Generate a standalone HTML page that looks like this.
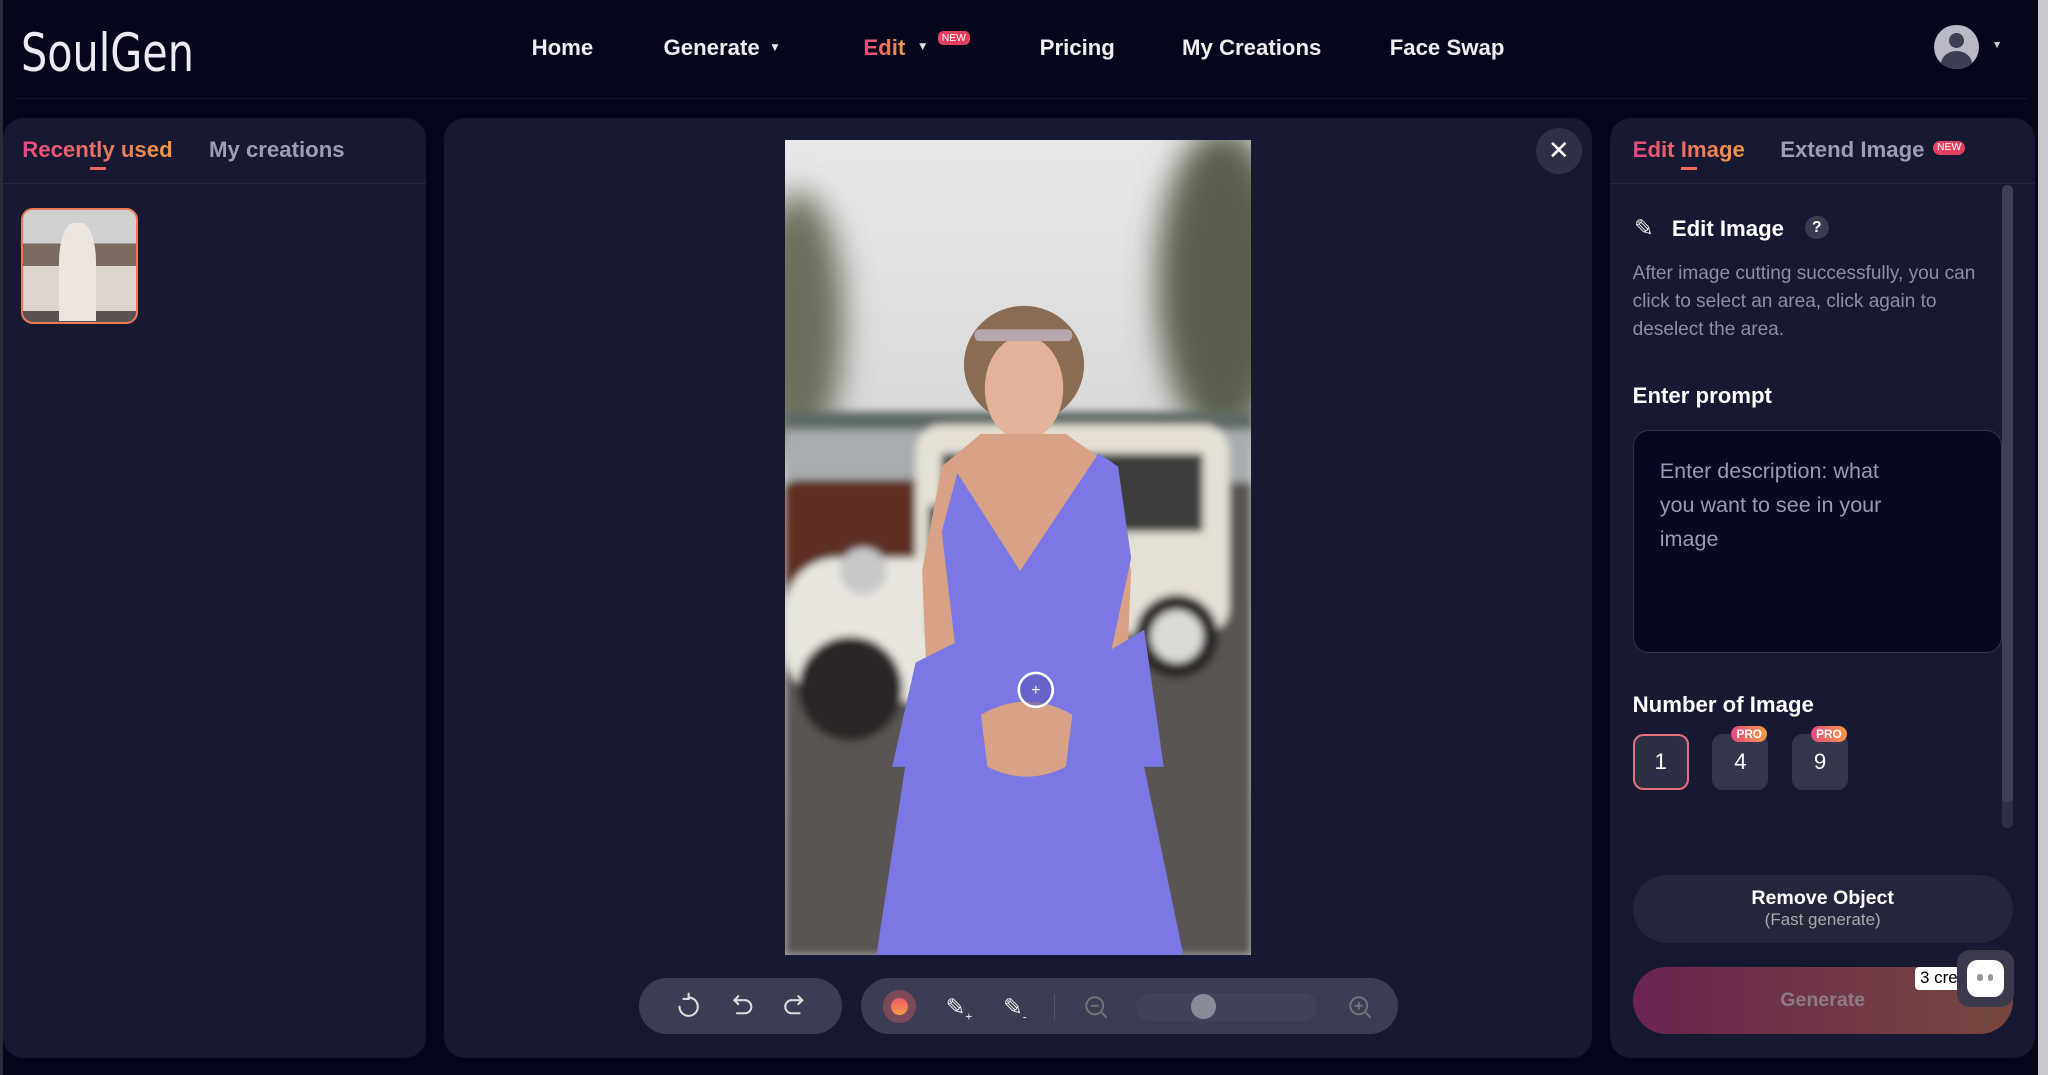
<!DOCTYPE html>
<html><head><meta charset="utf-8">
<style>
*{box-sizing:border-box;margin:0;padding:0}
html,body{width:2048px;height:1075px;overflow:hidden;background:#05061c}
#root{zoom:1.30612;width:1568px;height:823px;position:relative;font-family:"Liberation Sans",sans-serif;color:#fff;background:#05061c}
.abs{position:absolute}
.nav{font-size:17px;font-weight:600;color:#eee;top:27px}
.panel{background:#171831;border-radius:16px;top:90px;height:720px}
.grad{background:linear-gradient(90deg,#e8497e,#f39a45);-webkit-background-clip:text;color:transparent}
.tb{background:#3c3d55;border-radius:22px;top:749px;height:43px}
.num{width:43px;height:43px;border-radius:8px;background:#35364c;top:562px;font-size:17px;display:flex;align-items:center;justify-content:center}
.pro{position:absolute;top:-6px;right:1px;font-size:9px;font-weight:700;background:linear-gradient(90deg,#e8497e,#f39a45);border-radius:7px;padding:1px 4px}
</style></head><body><div id="root">
<div class="abs" style="left:16px;top:18px;font-size:40px;color:#eceaf2;font-family:'DejaVu Sans Condensed','Liberation Sans Narrow',sans-serif;transform:scaleX(.88);transform-origin:left">SoulGen</div>
<div class="abs nav" style="left:407px">Home</div>
<div class="abs nav" style="left:508px">Generate <span style="font-size:9px;vertical-align:3px">&nbsp;▼</span></div>
<div class="abs nav grad" style="left:661px">Edit</div><div class="abs" style="left:702px;top:31px;font-size:9px;color:#ddd">▼</div>
<div class="abs" style="left:718px;top:24px;font-size:8px;background:#e5405e;border-radius:4px;padding:1px 3px">NEW</div>
<div class="abs nav" style="left:796px">Pricing</div>
<div class="abs nav" style="left:905px">My Creations</div>
<div class="abs nav" style="left:1064px">Face Swap</div>
<div class="abs" style="left:1481px;top:19px;width:34px;height:34px;border-radius:50%;background:#b8b9c4;overflow:hidden"><div class="abs" style="left:11px;top:6px;width:12px;height:12px;border-radius:50%;background:#3d3e52"></div><div class="abs" style="left:5px;top:20px;width:24px;height:20px;border-radius:50%;background:#3d3e52"></div></div>
<div class="abs" style="left:1525px;top:31px;font-size:8px;color:#ccc">▼</div>
<div class="abs" style="left:12px;top:75px;width:1540px;height:1px;background:#15172c"></div>

<div class="abs panel" style="left:2px;width:324px"></div>
<div class="abs grad" style="left:17px;top:105px;font-size:17px;font-weight:600">Recently used</div>
<div class="abs" style="left:69px;top:128px;width:12px;height:2px;background:#ee6a5e"></div>
<div class="abs" style="left:160px;top:105px;font-size:17px;font-weight:600;color:#9d9eb2">My creations</div>
<div class="abs" style="left:2px;top:140px;width:324px;height:1px;background:#262842"></div>
<div class="abs" style="left:16px;top:159px;width:90px;height:89px;border-radius:9px;border:2px solid #ee7a5a;background:linear-gradient(#cfd0d2 0 30%,#7a6b60 30% 50%,#dcd6cf 50% 90%,#5a5350 90%);overflow:hidden"><div class="abs" style="left:28px;top:10px;width:28px;height:75px;background:#ece6df;border-radius:40% 40% 0 0"></div></div>

<div class="abs panel" style="left:340px;width:879px"></div>
<svg class="abs" style="left:601px;top:107px" width="357" height="624" viewBox="0 0 357 624">
<defs><linearGradient id="sk" x1="0" y1="0" x2="0" y2="1"><stop offset="0" stop-color="#e8e8e8"/><stop offset="1" stop-color="#bcbdbd"/></linearGradient>
<filter id="bl"><feGaussianBlur stdDeviation="12"/></filter><filter id="b2"><feGaussianBlur stdDeviation="3"/></filter></defs>
<rect width="357" height="624" fill="url(#sk)"/>
<g filter="url(#bl)"><ellipse cx="10" cy="140" rx="35" ry="100" fill="#6a6e5a"/>
<ellipse cx="335" cy="110" rx="50" ry="120" fill="#5a5e4c"/></g>
<g filter="url(#b2)">
<rect x="0" y="208" width="357" height="14" fill="#5f6a66"/>
<rect x="0" y="222" width="357" height="40" fill="#a8acae"/>
<rect x="0" y="262" width="357" height="362" fill="#5a5552"/>
<rect x="0" y="300" width="60" height="30" fill="#4e6d3a"/>
<rect x="0" y="260" width="150" height="90" rx="10" fill="#5e2d22"/>
<rect x="100" y="218" width="240" height="160" rx="20" fill="#e5e0d6"/>
<rect x="120" y="240" width="200" height="60" fill="#3d3c3a"/>
<rect x="0" y="320" width="140" height="110" rx="40" fill="#e8e5de"/>
<circle cx="50" cy="420" r="40" fill="#2a2827"/><circle cx="300" cy="380" r="32" fill="#2a2827"/><circle cx="300" cy="380" r="20" fill="#dcdad5"/>
<circle cx="60" cy="330" r="18" fill="#c8c8c8"/>
<rect x="110" y="280" width="40" height="100" fill="#1e1e1e"/>
</g>
<ellipse cx="183" cy="172" rx="46" ry="45" fill="#8a6b53"/>
<ellipse cx="183" cy="190" rx="30" ry="40" fill="#e2b39a"/>
<rect x="145" y="145" width="75" height="9" rx="4" fill="#b9a7ae"/>
<path d="M150 225 L215 225 L250 250 L265 330 L260 450 L240 470 L130 470 L110 450 L105 330 L120 250 Z" fill="#d8a287"/>
<path d="M132 255 L180 330 L240 240 L255 250 L265 320 L250 390 L275 375 L290 480 L275 480 L305 624 L70 624 L92 480 L82 480 L100 400 L130 385 L120 300 Z" fill="#7b77e4"/>
<path d="M150 440 Q185 420 220 440 L215 480 Q185 495 155 480 Z" fill="#d8a287"/>
<circle cx="192" cy="421" r="13" fill="#5a56b8" fill-opacity=".6" stroke="#fff" stroke-width="2"/>
<text x="192" y="425" font-size="12" fill="#fff" text-anchor="middle" font-family="Liberation Sans">+</text>
</svg>
<div class="abs" style="left:1176px;top:98px;width:35px;height:35px;border-radius:50%;background:#2f3046;color:#fff;font-size:20px;text-align:center;line-height:34px">✕</div>

<div class="abs tb" style="left:489px;width:156px"></div>
<svg class="abs" style="left:489px;top:749px" width="156" height="43" viewBox="0 0 156 43" fill="none" stroke="#ddd" stroke-width="1.6" stroke-linecap="round">
<path d="M38 15 A7 7 0 1 1 31 22"/><path d="M38 12 L38 16 L34 16"/>
<path d="M73 17 H81 A5 5 0 0 1 81 27 H75"/><path d="M76 14 L73 17 L76 20"/>
<path d="M125 17 H117 A5 5 0 0 0 117 27 H123"/><path d="M122 14 L125 17 L122 20"/>
</svg>
<div class="abs tb" style="left:659px;width:411px"></div>
<div class="abs" style="left:676px;top:758px;width:25px;height:25px;border-radius:50%;background:#7a4a5a"></div>
<div class="abs" style="left:682px;top:764px;width:13px;height:13px;border-radius:50%;background:linear-gradient(#f05a6a,#f49a45)"></div>
<div class="abs" style="left:724px;top:760px;font-size:18px;color:#eee">✎<sub style="font-size:9px">+</sub></div>
<div class="abs" style="left:768px;top:760px;font-size:18px;color:#eee">✎<sub style="font-size:9px">-</sub></div>
<div class="abs" style="left:807px;top:761px;width:1px;height:20px;background:#55566b"></div>
<svg class="abs" style="left:829px;top:761px" width="20" height="20" fill="none" stroke="#777" stroke-width="1.4"><circle cx="9" cy="9" r="6.5"/><path d="M14 14 L18 18 M6 9 H12"/></svg>
<div class="abs" style="left:870px;top:760px;width:138px;height:22px;border-radius:11px;background:#424359"></div>
<div class="abs" style="left:912px;top:761px;width:19px;height:19px;border-radius:50%;background:#8a8b99"></div>
<svg class="abs" style="left:1031px;top:761px" width="20" height="20" fill="none" stroke="#777" stroke-width="1.4"><circle cx="9" cy="9" r="6.5"/><path d="M14 14 L18 18 M6 9 H12 M9 6 V12"/></svg>

<div class="abs panel" style="left:1233px;width:325px"></div>
<div class="abs grad" style="left:1250px;top:105px;font-size:17px;font-weight:600">Edit Image</div>
<div class="abs" style="left:1287px;top:128px;width:12px;height:2px;background:#ee6a5e"></div>
<div class="abs" style="left:1363px;top:105px;font-size:17px;font-weight:600;color:#9d9eb2">Extend Image</div>
<div class="abs" style="left:1480px;top:108px;font-size:8px;background:#e5405e;border-radius:6px;padding:1px 3px">NEW</div>
<div class="abs" style="left:1233px;top:140px;width:325px;height:1px;background:#262842"></div>
<div class="abs" style="left:1533px;top:142px;width:8px;height:492px;border-radius:4px;background:#2e2f45"></div>
<div class="abs" style="left:1533px;top:142px;width:8px;height:472px;border-radius:4px;background:#3f4056"></div>
<div class="abs" style="left:1251px;top:164px;font-size:18px;color:#eee">✎</div>
<div class="abs" style="left:1280px;top:165px;font-size:17px;font-weight:700">Edit Image</div>
<div class="abs" style="left:1382px;top:165px;width:18px;height:18px;border-radius:50%;background:#3a3b50;font-size:12px;font-weight:700;text-align:center;line-height:18px">?</div>
<div class="abs" style="left:1250px;top:199px;width:282px;font-size:14.6px;line-height:21.5px;color:#8e8fa3">After image cutting successfully, you can click to select an area, click again to deselect the area.</div>
<div class="abs" style="left:1250px;top:293px;font-size:17px;font-weight:700">Enter prompt</div>
<div class="abs" style="left:1250px;top:329px;width:283px;height:171px;border-radius:12px;border:1px solid #34354c;background:#070822;padding:18px 20px;font-size:16.5px;line-height:26px;color:#9a9bad"><div style="width:185px">Enter description: what you want to see in your image</div></div>
<div class="abs" style="left:1250px;top:530px;font-size:17px;font-weight:700">Number of Image</div>
<div class="abs num" style="left:1250px;border:2px solid #e9707a;background:#2e2f45">1</div>
<div class="abs num" style="left:1311px">4<span class="pro">PRO</span></div>
<div class="abs num" style="left:1372px">9<span class="pro">PRO</span></div>
<div class="abs" style="left:1250px;top:670px;width:291px;height:52px;border-radius:26px;background:#25263b;text-align:center;padding-top:9px"><div style="font-size:15px;font-weight:700">Remove Object</div><div style="font-size:13px;color:#aaa">(Fast generate)</div></div>
<div class="abs" style="left:1250px;top:740px;width:291px;height:52px;border-radius:26px;background:linear-gradient(90deg,#6a2550,#76473e);text-align:center;line-height:52px;font-size:15px;font-weight:700;color:#8c7a85">Generate</div>
<div class="abs" style="left:1466px;top:740px;width:40px;height:18px;background:#fff;color:#000;font-size:13px;padding:1px 4px;border-radius:3px">3 cre</div>
<div class="abs" style="left:1498px;top:727px;width:44px;height:44px;border-radius:10px;background:#3a3a4c"></div>
<div class="abs" style="left:1506px;top:735px;width:28px;height:28px;border-radius:8px;background:#fff"><div class="abs" style="left:8px;top:11px;width:4px;height:5px;border-radius:2px;background:#999"></div><div class="abs" style="left:16px;top:11px;width:4px;height:5px;border-radius:2px;background:#999"></div></div>
<div class="abs" style="left:1560px;top:0;width:8px;height:823px;background:#c9c9cf"></div>
<div class="abs" style="left:0;top:0;width:2px;height:823px;background:#2a2b3a"></div>
</div></body></html>
